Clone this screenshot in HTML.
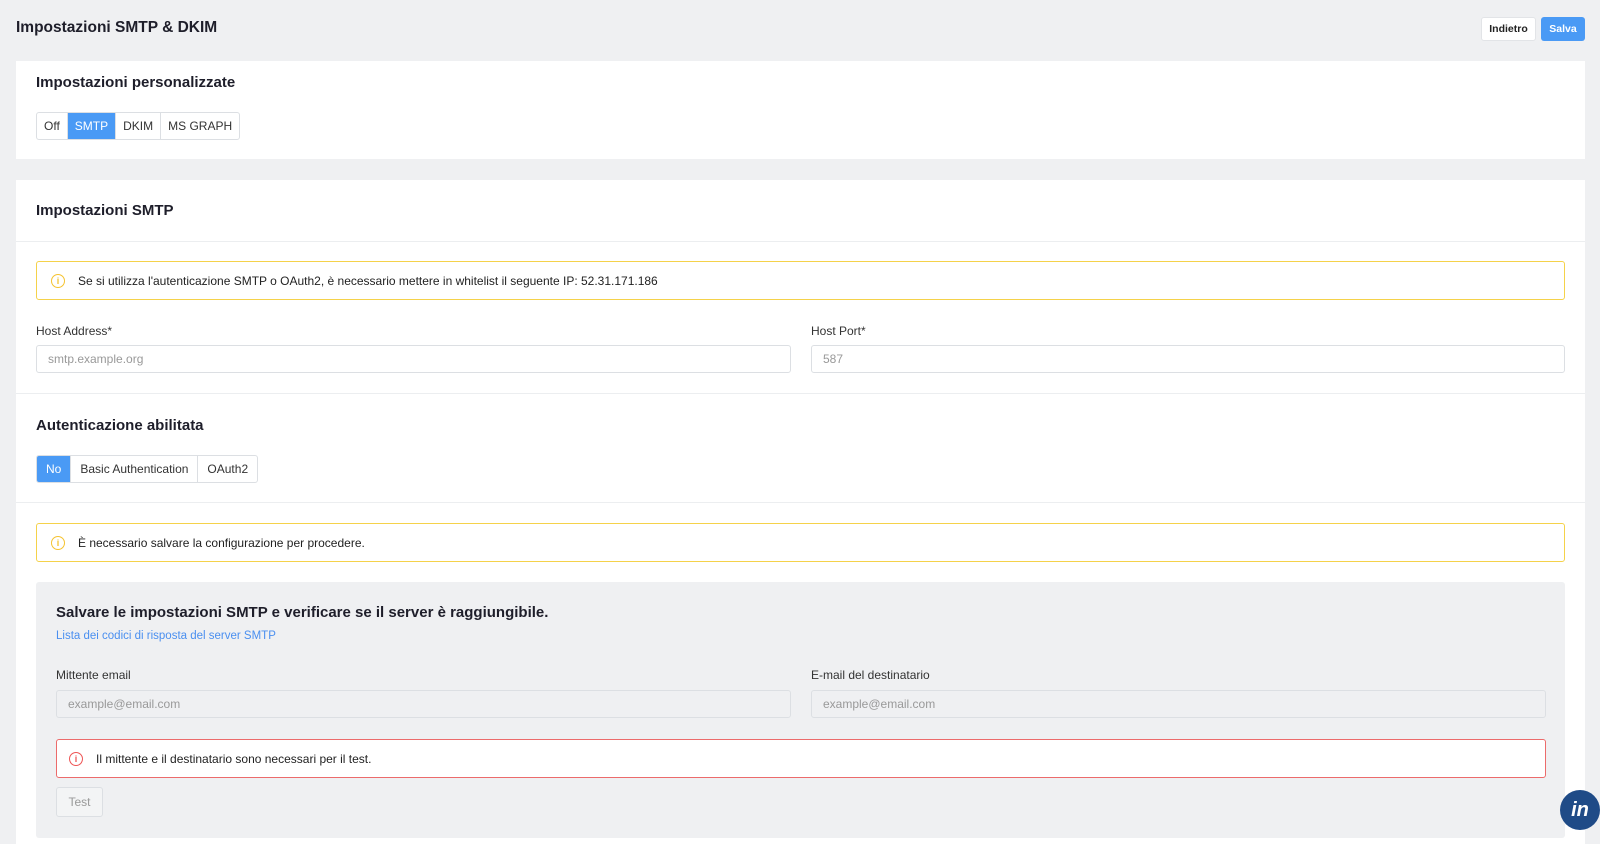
<!DOCTYPE html>
<html><head><meta charset="utf-8"><style>
*{box-sizing:border-box;margin:0;padding:0}
body{width:1600px;height:844px;overflow:hidden;background:#eff0f2;font-family:"Liberation Sans",sans-serif;color:#222;position:relative}
.a{position:absolute}
.card{background:#fff}
h1{font-size:15.5px;font-weight:bold;color:#1e1e2a}
.h{font-size:15px;font-weight:bold;color:#1e1e2a}
.seg{display:flex;border:1px solid #dcdfe3;border-radius:3px;overflow:hidden;font-size:12px;color:#333}
.seg div{padding:0 7px;display:flex;align-items:center;border-right:1px solid #dcdfe3}
.seg div:last-child{border-right:none}
.seg .on{background:#4a9af5;color:#fff}
.seg2 div{padding:0 9px}
.hr{height:1px;background:#eceef0}
.warn{border:1px solid #f5d24a;border-radius:3px;background:#fff;font-size:12px;color:#222;display:flex;align-items:center;padding-left:14px}
.err{border:1px solid #ec6b6b;border-radius:3px;background:#fff;font-size:12px;color:#222;display:flex;align-items:center;padding-left:12px}
.ic{width:14px;height:14px;border-radius:50%;border:1.5px solid #f5c330;color:#f5c330;font-size:9px;display:flex;align-items:center;justify-content:center;font-weight:bold;margin-right:13px}
.lbl{font-size:12px;color:#333}
.inp{border:1px solid #dcdfe3;border-radius:3px;background:#fff;font-size:12px;color:#999;display:flex;align-items:center;padding-left:11px}
</style></head><body>
<h1 class="a" style="left:16px;top:19px">Impostazioni SMTP &amp; DKIM</h1>
<div class="a" style="left:1481px;top:17px;width:55px;height:24px;background:#fff;border:1px solid #e2e4e7;border-radius:3px;font-size:10.5px;font-weight:bold;display:flex;align-items:center;justify-content:center">Indietro</div>
<div class="a" style="left:1541px;top:17px;width:44px;height:24px;background:#4a9af5;border-radius:3px;color:#fff;font-size:10.5px;font-weight:bold;display:flex;align-items:center;justify-content:center">Salva</div>

<div class="a card" style="left:16px;top:61px;width:1569px;height:98px"></div>
<div class="a h" style="left:36px;top:74px">Impostazioni personalizzate</div>
<div class="a seg" style="left:36px;top:112px;height:28px"><div>Off</div><div class="on">SMTP</div><div>DKIM</div><div>MS GRAPH</div></div>

<div class="a card" style="left:16px;top:180px;width:1569px;height:664px"></div>
<div class="a h" style="left:36px;top:202px">Impostazioni SMTP</div>
<div class="a hr" style="left:16px;top:241px;width:1569px"></div>
<div class="a warn" style="left:36px;top:261px;width:1529px;height:39px"><span class="ic">i</span>Se si utilizza l'autenticazione SMTP o OAuth2, è necessario mettere in whitelist il seguente IP: 52.31.171.186</div>
<div class="a lbl" style="left:36px;top:324px">Host Address*</div>
<div class="a lbl" style="left:811px;top:324px">Host Port*</div>
<div class="a inp" style="left:36px;top:345px;width:755px;height:28px">smtp.example.org</div>
<div class="a inp" style="left:811px;top:345px;width:754px;height:28px">587</div>
<div class="a hr" style="left:16px;top:393px;width:1569px"></div>
<div class="a h" style="left:36px;top:417px">Autenticazione abilitata</div>
<div class="a seg seg2" style="left:36px;top:455px;height:28px"><div class="on">No</div><div>Basic Authentication</div><div>OAuth2</div></div>
<div class="a hr" style="left:16px;top:502px;width:1569px"></div>
<div class="a warn" style="left:36px;top:523px;width:1529px;height:39px"><span class="ic">i</span>È necessario salvare la configurazione per procedere.</div>

<div class="a" style="left:36px;top:582px;width:1529px;height:256px;background:#eff0f2;border-radius:3px"></div>
<div class="a h" style="left:56px;top:604px">Salvare le impostazioni SMTP e verificare se il server è raggiungibile.</div>
<div class="a" style="left:56px;top:630px;font-size:11.5px;color:#4a8ff0">Lista dei codici di risposta del server SMTP</div>
<div class="a lbl" style="left:56px;top:668px">Mittente email</div>
<div class="a lbl" style="left:811px;top:668px">E-mail del destinatario</div>
<div class="a inp" style="left:56px;top:690px;width:735px;height:28px;background:#eff0f2">example@email.com</div>
<div class="a inp" style="left:811px;top:690px;width:735px;height:28px;background:#eff0f2">example@email.com</div>
<div class="a err" style="left:56px;top:739px;width:1490px;height:39px"><span class="ic" style="border-color:#e55;color:#e55">i</span>Il mittente e il destinatario sono necessari per il test.</div>
<div class="a" style="left:56px;top:787px;width:47px;height:30px;border:1px solid #dcdfe3;border-radius:3px;background:#f3f4f5;font-size:12px;color:#999;display:flex;align-items:center;justify-content:center">Test</div>

<div class="a" style="left:1560px;top:790px;width:40px;height:40px;border-radius:50%;background:#1f4b87;color:#fff;font-size:20px;font-weight:bold;font-style:italic;display:flex;align-items:center;justify-content:center">in</div>
</body></html>
